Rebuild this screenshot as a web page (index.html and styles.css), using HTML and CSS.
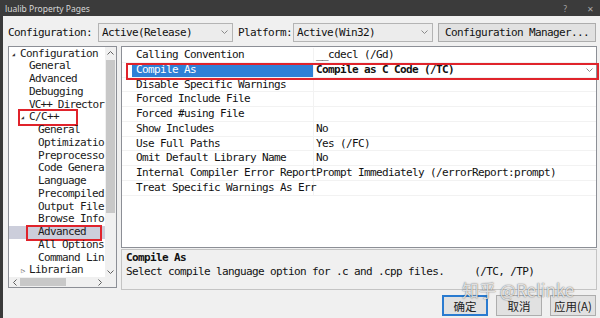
FILE: index.html
```html
<!DOCTYPE html>
<html>
<head>
<meta charset="utf-8">
<link rel="stylesheet" href="styles.css">
</head>
<body>
<div class="window">
  <div class="titlebar">
    <span class="title">lualib Property Pages</span>
    <span class="tb-btns"><span class="tb-q">?</span><span class="tb-x">✕</span></span>
  </div>
  <div class="content">
    <div class="configrow">
      <span class="label">Configuration:</span>
      <div class="combo combo-config"><span>Active(Release)</span><svg class="chev" width="7" height="4" viewBox="0 0 7 4"><path d="M0.5 0.5 L3.5 3.5 L6.5 0.5" fill="none" stroke="#8a8a8a" stroke-width="1"/></svg></div>
      <span class="label label-platform">Platform:</span>
      <div class="combo combo-platform"><span>Active(Win32)</span><svg class="chev" width="7" height="4" viewBox="0 0 7 4"><path d="M0.5 0.5 L3.5 3.5 L6.5 0.5" fill="none" stroke="#8a8a8a" stroke-width="1"/></svg></div>
      <div class="btn btn-manager">Configuration Manager...</div>
    </div>

    <div class="panes">
      <div class="tree">
        <div class="tree-list">
          <div class="ti l1"><span class="exp">◢</span>Configuration</div>
          <div class="ti l2">General</div>
          <div class="ti l2">Advanced</div>
          <div class="ti l2">Debugging</div>
          <div class="ti l2 tight">VC++ Director</div>
          <div class="ti l2 mark-cpp"><span class="exp">◢</span>C/C++</div>
          <div class="ti l3">General</div>
          <div class="ti l3">Optimizatio</div>
          <div class="ti l3">Preprocesso</div>
          <div class="ti l3">Code Genera</div>
          <div class="ti l3">Language</div>
          <div class="ti l3">Precompiled</div>
          <div class="ti l3">Output File</div>
          <div class="ti l3">Browse Info</div>
          <div class="ti l3 sel mark-adv">Advanced</div>
          <div class="ti l3">All Options</div>
          <div class="ti l3">Command Lin</div>
          <div class="ti l2"><span class="exp coll">▷</span>Librarian</div>
        </div>
        <div class="vscroll">
          <div class="sarrow"><svg width="7" height="4" viewBox="0 0 7 4"><path d="M0.5 3.5 L3.5 0.5 L6.5 3.5" fill="none" stroke="#606060" stroke-width="1"/></svg></div>
          <div class="vtrack"><div class="vthumb"></div></div>
          <div class="sarrow"><svg width="7" height="4" viewBox="0 0 7 4"><path d="M0.5 0.5 L3.5 3.5 L6.5 0.5" fill="none" stroke="#606060" stroke-width="1"/></svg></div>
        </div>
        <div class="hscroll">
          <div class="sarrow"><svg width="4" height="7" viewBox="0 0 4 7"><path d="M3.5 0.5 L0.5 3.5 L3.5 6.5" fill="none" stroke="#606060" stroke-width="1"/></svg></div>
          <div class="htrack"><div class="hthumb"></div></div>
          <div class="sarrow"><svg width="4" height="7" viewBox="0 0 4 7"><path d="M0.5 0.5 L3.5 3.5 L0.5 6.5" fill="none" stroke="#606060" stroke-width="1"/></svg></div>
        </div>
        <div class="corner"></div>
      </div>

      <div class="rightcol">
        <div class="grid">
          <div class="row"><span class="gut"></span><span class="name">Calling Convention</span><span class="val">__cdecl (/Gd)</span></div>
          <div class="row row-active"><span class="gut"></span><span class="name">Compile As</span><span class="val"><b>Compile as C Code (/TC)</b><svg class="chev" width="7" height="4" viewBox="0 0 7 4"><path d="M0.5 0.5 L3.5 3.5 L6.5 0.5" fill="none" stroke="#8a8a8a" stroke-width="1"/></svg></span></div>
          <div class="row"><span class="gut"></span><span class="name">Disable Specific Warnings</span><span class="val"></span></div>
          <div class="row"><span class="gut"></span><span class="name">Forced Include File</span><span class="val"></span></div>
          <div class="row"><span class="gut"></span><span class="name">Forced #using File</span><span class="val"></span></div>
          <div class="row"><span class="gut"></span><span class="name">Show Includes</span><span class="val">No</span></div>
          <div class="row"><span class="gut"></span><span class="name">Use Full Paths</span><span class="val">Yes (/FC)</span></div>
          <div class="row"><span class="gut"></span><span class="name">Omit Default Library Name</span><span class="val">No</span></div>
          <div class="row"><span class="gut"></span><span class="name">Internal Compiler Error Report</span><span class="val">Prompt Immediately (/errorReport:prompt)</span></div>
          <div class="row"><span class="gut"></span><span class="name">Treat Specific Warnings As Err</span><span class="val"></span></div>
        </div>
        <div class="desc">
          <div class="desc-title">Compile As</div>
          <div class="desc-text">Select compile language option for .c and .cpp files.     (/TC, /TP)</div>
        </div>
      </div>
    </div>

    <div class="buttons">
      <div class="btn dbtn default">确定</div>
      <div class="btn dbtn">取消</div>
      <div class="btn dbtn">应用(A)</div>
    </div>
  </div>
  <div class="watermark">知乎 @Relinke</div>
</div>
</body>
</html>
```

FILE: styles.css
```css
* { box-sizing: border-box; }
html, body { margin: 0; padding: 0; }
body {
  width: 600px;
  height: 318px;
  overflow: hidden;
  background: #f0f0f0;
  font-family: "DejaVu Sans Mono", "Noto Sans CJK SC", monospace;
  font-size: 11px;
  letter-spacing: -0.62px;
  color: #111;
}
.window {
  position: relative;
  width: 600px;
  height: 318px;
  display: flex;
  flex-direction: column;
}
.titlebar {
  height: 16px;
  flex: none;
  background: #3b3b3b;
  color: #d8d8d8;
  display: flex;
  align-items: center;
  justify-content: space-between;
  padding: 0 6px 0 5px;
  font-family: "Noto Sans", "Open Sans", sans-serif;
  font-size: 8.5px;
  letter-spacing: 0;
}
.tb-btns { display: flex; gap: 20px; color: #aaa; font-size: 8px; }
.content {
  flex: 1;
  min-height: 0;
  border-left: 3px solid #3a3a3a;
  padding-left: 5px;
  display: flex;
  flex-direction: column;
}
.configrow {
  margin-top: 6px;
  height: 20px;
  flex: none;
  display: flex;
  align-items: center;
}
.label { white-space: nowrap; }
.combo {
  height: 19px;
  border: 1px solid #b4b4b4;
  background: #ececec;
  display: flex;
  align-items: center;
  justify-content: space-between;
  padding: 0 4px 0 3px;
  white-space: nowrap;
}
.combo-config { margin-left: 6px; width: 135px; }
.label-platform { margin-left: 5px; }
.combo-platform { margin-left: 1px; width: 140px; }
.btn {
  border: 1px solid #adadad;
  background: #e1e1e1;
  display: flex;
  align-items: center;
  justify-content: center;
  white-space: nowrap;
}
.btn-manager { margin-left: 5px; width: 158px; height: 19px; }

.panes {
  margin-top: 4px;
  height: 244px;
  flex: none;
  display: flex;
  align-items: flex-start;
}
.tree {
  width: 109px;
  height: 242px;
  border: 1px solid #8c8f96;
  background: #fff;
  display: grid;
  grid-template-columns: minmax(0, 1fr) 11px;
  grid-template-rows: minmax(0, 1fr) 10px;
  overflow: hidden;
}
.tree-list {
  overflow: hidden;
  padding-top: 0.5px;
  min-height: 0;
}
.ti {
  height: 12.75px;
  line-height: 12.75px;
  white-space: nowrap;
  color: #1a1a1a;
  position: relative;
}
.ti.tight { letter-spacing: -0.85px; }
.l1 { padding-left: 11px; }
.l2 { padding-left: 20px; }
.l3 { padding-left: 29px; }
.exp {
  display: inline-block;
  width: 7px;
  margin-left: -8px;
  margin-right: 1px;
  font-size: 5px;
  letter-spacing: 0;
  vertical-align: 1px;
  color: #333;
}
.exp.coll { font-size: 7px; color: #666; vertical-align: 0; }
.ti.sel { background: #cccedb; }
.mark-cpp::after {
  content: "";
  position: absolute;
  left: 9px;
  width: 56px;
  top: -2px;
  bottom: -2px;
  border: 2px solid #e0232b;
}
.mark-adv::after {
  content: "";
  position: absolute;
  left: 17px;
  width: 72px;
  top: -1px;
  bottom: -2px;
  border: 2px solid #e0232b;
}
.vscroll {
  background: #f0f0f0;
  display: flex;
  flex-direction: column;
  min-height: 0;
}
.sarrow {
  flex: none;
  width: 11px;
  height: 10px;
  display: flex;
  align-items: center;
  justify-content: center;
}
.vscroll .sarrow { height: 11px; }
.vtrack { flex: 1; min-height: 0; padding: 2px 1px 0; }
.vthumb { height: 153px; background: #c8c8c8; }
.hscroll {
  background: #f0f0f0;
  display: flex;
  min-width: 0;
}
.htrack { flex: 1; padding: 1px 0; }
.hthumb { width: 46px; height: 100%; background: #c8c8c8; }
.corner { background: #f0f0f0; }

.rightcol {
  margin-left: 4px;
  width: 476px;
  height: 244px;
  display: flex;
  flex-direction: column;
  gap: 1px;
}
.grid {
  height: 202px;
  flex: none;
  border: 1px solid #8c8f96;
  background: #fff;
  padding-top: 1px;
}
.row {
  height: 14.75px;
  display: grid;
  grid-template-columns: 10px 182px 1fr;
  border-bottom: 1px solid #f2f2f2;
  white-space: nowrap;
  position: relative;
}
.row > span { line-height: 13.75px; }
.name { padding-left: 4px; border-right: 1px solid #f2f2f2; position: relative; z-index: 1; }
.val { padding-left: 2px; overflow: hidden; }
.row-active .name { background: #2f80d6; color: #fff; }
.row-active .val {
  display: flex;
  align-items: center;
  justify-content: space-between;
  padding-right: 3px;
}
.row-active .val b { font-weight: bold; }
.row-active::after {
  content: "";
  position: absolute;
  left: 4px;
  right: -3px;
  top: 0;
  bottom: -3px;
  border: 2px solid #e0232b;
  z-index: 2;
}
.desc {
  height: 41px;
  flex: none;
  border: 1px solid #c4c4c4;
  background: #f0f0f0;
  padding: 1px 0 0 4px;
}
.desc-title { font-weight: bold; line-height: 14px; }
.desc-text { line-height: 14px; white-space: pre; }

.buttons {
  margin-top: 5px;
  flex: none;
  display: flex;
  justify-content: flex-end;
  gap: 8px;
  padding-right: 4px;
}
.dbtn {
  width: 46px;
  height: 21px;
  font-size: 11.5px;
  line-height: 12px;
  letter-spacing: 0;
  font-family: "Noto Sans CJK SC", "DejaVu Sans Mono", sans-serif;
  color: #222;
}
.dbtn.default { border: 2px solid #2a7bd0; }

.watermark {
  position: absolute;
  left: 462px;
  top: 282px;
  font-family: "Noto Sans CJK SC", "Noto Sans", sans-serif;
  font-size: 17px;
  line-height: 16px;
  letter-spacing: 0;
  color: rgba(255, 255, 255, 0.8);
  text-shadow: 0 0 1px rgba(0, 0, 0, 0.55), 0 0 2px rgba(0, 0, 0, 0.25);
  white-space: nowrap;
  pointer-events: none;
}
```
